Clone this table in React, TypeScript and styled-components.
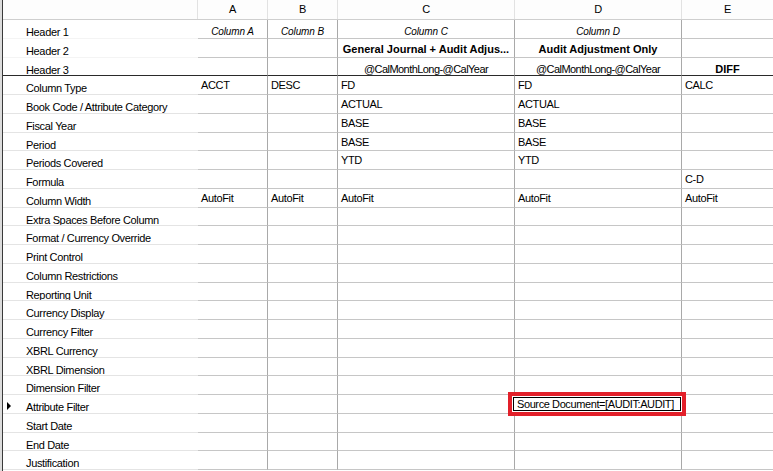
import React from "react";
import styled, { createGlobalStyle, css } from "styled-components";

const GlobalStyle = createGlobalStyle`
  html, body { margin: 0; padding: 0; background: #ffffff; }
  body {
    font-family: "Liberation Sans", Arial, sans-serif;
    font-size: 11px;
    color: #000000;
    overflow: hidden;
  }
`;

const COLS = "195px 70px 70px 177px 167px 91px";
const ROW_H = "18.75px";

const Frame = styled.div`
  width: 773px;
  height: 471px;
  box-sizing: border-box;
  border-left: 2px solid #dcdcdc;
  overflow: hidden;
`;

const Sheet = styled.div`
  display: flex;
  flex-direction: column;
  border-left: 1px solid #3a3a3a;
  height: 100%;
  box-sizing: border-box;
`;

const HeaderRow = styled.div`
  display: grid;
  grid-template-columns: ${COLS};
  height: 20px;
  box-sizing: border-box;
  border-bottom: 1px solid #cfcfcf;
  background: #fdfdfd;
`;

const LetterCell = styled.div<{ $last?: boolean }>`
  box-sizing: border-box;
  border-right: ${(p) => (p.$last ? "none" : "1px solid #e2e2e2")};
  text-align: center;
  padding-top: 3px;
  line-height: 13px;
  letter-spacing: -0.2px;
`;

const Corner = styled.div`
  border-right: 1px solid #e2e2e2;
`;

const Row = styled.div`
  display: grid;
  grid-template-columns: ${COLS};
  height: ${ROW_H};
  flex: 0 0 ${ROW_H};
`;

const LabelCell = styled.div<{ $thick?: boolean; $soft?: boolean }>`
  box-sizing: border-box;
  display: flex;
  align-items: flex-start;
  padding-left: 4px;
  overflow: hidden;
  border-bottom: 1px solid ${(p) => (p.$thick ? "#2a2a2a" : p.$soft ? "#f4f4f4" : "#e4e4e4")};
`;

const Indicator = styled.span`
  flex: 0 0 19px;
  height: 8px;
  margin-top: 7px;
`;

const Arrow = styled.span`
  display: block;
  width: 0;
  height: 0;
  border-left: 4px solid #000;
  border-top: 4px solid transparent;
  border-bottom: 4px solid transparent;
`;

const LabelText = styled.span`
  padding-top: 6px;
  line-height: 12px;
  white-space: nowrap;
  letter-spacing: -0.35px;
`;

type Kind = "plain" | "italic" | "bold" | "center";

const Cell = styled.div<{ $last?: boolean; $thick?: boolean; $kind: Kind }>`
  position: relative;
  box-sizing: border-box;
  border-right: ${(p) => (p.$last ? "none" : "1px solid #a9a9a9")};
  border-bottom: 1px solid ${(p) => (p.$thick ? "#2a2a2a" : "#c6c6c6")};
  white-space: nowrap;
  line-height: 12px;
  padding: 3px 3px 0 3px;
  letter-spacing: -0.35px;
  ${(p) =>
    p.$kind === "italic" &&
    css`
      font-style: italic;
      font-size: 10px;
      text-align: center;
      padding-top: 6px;
      letter-spacing: -0.1px;
    `}
  ${(p) =>
    p.$kind === "bold" &&
    css`
      font-weight: bold;
      text-align: center;
      padding-top: 4px;
      letter-spacing: 0;
    `}
  ${(p) =>
    p.$kind === "center" &&
    css`
      text-align: center;
      padding-top: 5px;
      letter-spacing: -0.55px;
    `}
`;

const Bold = styled.span`
  font-weight: bold;
  letter-spacing: 0;
`;

const Highlight = styled.div`
  position: absolute;
  left: -7px;
  top: -3px;
  width: 178px;
  height: 24px;
  box-sizing: border-box;
  border: 4px solid #e2202a;
  padding: 1px;
  z-index: 2;
  background: #ffffff;
`;

const Editor = styled.div`
  box-sizing: border-box;
  height: 100%;
  border: 1px solid #000000;
  background: #ffffff;
  padding: 0 3px;
  line-height: 13px;
  letter-spacing: -0.4px;
  white-space: nowrap;
`;

type RowDef = {
  label: string;
  kind: Kind;
  values: string[];
  thick?: boolean;
  soft?: boolean;
  current?: boolean;
};

const letters = ["A", "B", "C", "D", "E"];

const empty = ["", "", "", "", ""];

const rows: RowDef[] = [
  { label: "Header 1", kind: "italic", values: ["Column A", "Column B", "Column C", "Column D", ""], soft: true },
  { label: "Header 2", kind: "bold", values: ["", "", "General Journal + Audit Adjus...", "Audit Adjustment Only", ""], soft: true },
  { label: "Header 3", kind: "center", values: ["", "", "@CalMonthLong-@CalYear", "@CalMonthLong-@CalYear", "DIFF"], thick: true },
  { label: "Column Type", kind: "plain", values: ["ACCT", "DESC", "FD", "FD", "CALC"] },
  { label: "Book Code / Attribute Category", kind: "plain", values: ["", "", "ACTUAL", "ACTUAL", ""] },
  { label: "Fiscal Year", kind: "plain", values: ["", "", "BASE", "BASE", ""] },
  { label: "Period", kind: "plain", values: ["", "", "BASE", "BASE", ""] },
  { label: "Periods Covered", kind: "plain", values: ["", "", "YTD", "YTD", ""] },
  { label: "Formula", kind: "plain", values: ["", "", "", "", "C-D"] },
  { label: "Column Width", kind: "plain", values: ["AutoFit", "AutoFit", "AutoFit", "AutoFit", "AutoFit"] },
  { label: "Extra Spaces Before Column", kind: "plain", values: empty },
  { label: "Format / Currency Override", kind: "plain", values: empty },
  { label: "Print Control", kind: "plain", values: empty },
  { label: "Column Restrictions", kind: "plain", values: empty },
  { label: "Reporting Unit", kind: "plain", values: empty },
  { label: "Currency Display", kind: "plain", values: empty },
  { label: "Currency Filter", kind: "plain", values: empty },
  { label: "XBRL Currency", kind: "plain", values: empty },
  { label: "XBRL Dimension", kind: "plain", values: empty },
  { label: "Dimension Filter", kind: "plain", values: empty },
  { label: "Attribute Filter", kind: "plain", values: empty, current: true },
  { label: "Start Date", kind: "plain", values: empty },
  { label: "End Date", kind: "plain", values: empty },
  { label: "Justification", kind: "plain", values: empty },
];

export default function App() {
  return (
    <>
      <GlobalStyle />
      <Frame>
        <Sheet>
          <HeaderRow>
            <Corner />
            {letters.map((l, i) => (
              <LetterCell key={l} $last={i === letters.length - 1}>
                {l}
              </LetterCell>
            ))}
          </HeaderRow>
          {rows.map((r) => (
            <Row key={r.label}>
              <LabelCell $thick={r.thick} $soft={r.soft}>
                <Indicator>{r.current && <Arrow />}</Indicator>
                <LabelText>{r.label}</LabelText>
              </LabelCell>
              {r.values.map((v, i) => (
                <Cell key={i} $kind={r.kind} $thick={r.thick} $last={i === 4}>
                  {v === "DIFF" ? <Bold>{v}</Bold> : v}
                  {r.current && i === 3 && (
                    <Highlight>
                      <Editor>Source Document=[AUDIT:AUDIT]</Editor>
                    </Highlight>
                  )}
                </Cell>
              ))}
            </Row>
          ))}
        </Sheet>
      </Frame>
    </>
  );
}
